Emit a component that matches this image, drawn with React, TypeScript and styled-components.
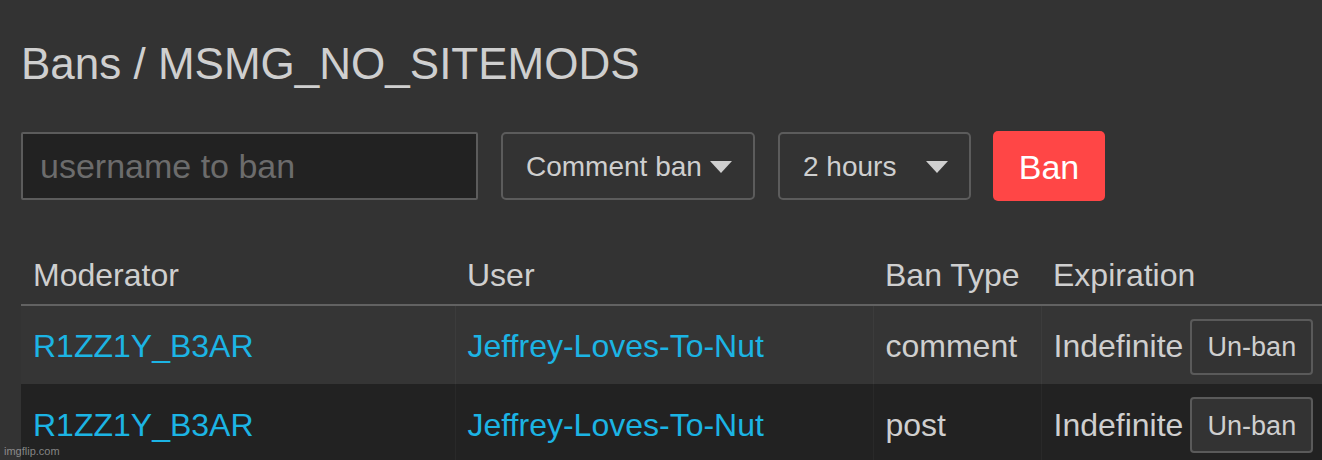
import React from 'react'
import styled, { createGlobalStyle } from 'styled-components';

const GlobalStyle = createGlobalStyle`
  html, body {
    margin: 0;
    padding: 0;
    background: #333333;
    font-family: "Liberation Sans", Arial, sans-serif;
    color: #cfcfcf;
    overflow: hidden;
  }
`

const Page = styled.div`
  position: relative;
  height: 460px;
  padding: 39px 0 0 21px;
  box-sizing: border-box;
  overflow: hidden;
`
const Title = styled.h1`
  margin: 0;
  font-size: 44px;
  line-height: 50px;
  font-weight: normal;
  color: #cfcfcf;
`
const Controls = styled.div`
  display: flex;
  align-items: center;
  height: 70px;
  margin-top: 42px;
  gap: 23px;
`
const UserInput = styled.input`
  width: 457px;
  height: 68px;
  box-sizing: border-box;
  background: #222222;
  border: 2px solid #5c5c5c;
  border-radius: 2px;
  padding: 0 17px;
  font-family: inherit;
  font-size: 34px;
  color: #cfcfcf;
  outline: none;
  &::placeholder {
    color: #6c6c6c;
  }
`
const Select = styled.div<{ $width: number }>`
  width: ${p => p.$width}px;
  height: 68px;
  box-sizing: border-box;
  border: 2px solid #5c5c5c;
  border-radius: 5px;
  display: flex;
  align-items: center;
  justify-content: space-between;
  padding: 2px 21px 0 23px;
  font-size: 28px;
  color: #cfcfcf;
`
const Arrow = styled.svg`
  width: 22px;
  height: 12px;
  display: block;
`
const BanButton = styled.button`
  width: 112px;
  height: 70px;
  margin-left: -1px;
  border: none;
  border-radius: 5px;
  background: #ff4646;
  color: #ffffff;
  font-family: inherit;
  font-size: 34px;
  padding: 2px 0 0;
`
const Table = styled.table`
  margin-top: 46px;
  width: 1301px;
  border-collapse: collapse;
  table-layout: fixed;
  font-size: 32px;
`
const HeadCell = styled.th<{ $width?: number }>`
  ${p => p.$width ? `width: ${p.$width}px;` : ''}
  box-sizing: border-box;
  text-align: left;
  font-weight: normal;
  line-height: 37px;
  padding: 10px 12px 10px;
  border-bottom: 2px solid #626262;
  color: #cfcfcf;
  white-space: nowrap;
`
const Row = styled.tr<{ $dark?: boolean }>`
  background: ${p => p.$dark ? '#222222' : '#353535'};
`
const Cell = styled.td`
  height: 79px;
  box-sizing: border-box;
  padding: 3px 12px 0;
  vertical-align: middle;
  white-space: nowrap;
  border-left: 1px solid rgba(255, 255, 255, 0.035);
  &:first-child {
    border-left: none;
  }
`
const UserLink = styled.a`
  color: #1cb4e4;
  text-decoration: none;
`
const Expiry = styled.div`
  display: flex;
  align-items: center;
  gap: 7px;
`
const UnbanButton = styled.button`
  flex-shrink: 0;
  width: 123px;
  height: 56px;
  box-sizing: border-box;
  background: #333333;
  border: 2px solid #5a5a5a;
  border-radius: 4px;
  color: #cfcfcf;
  font-family: inherit;
  font-size: 27px;
  padding: 2px 0 0;
`
const Watermark = styled.span`
  position: absolute;
  left: 4px;
  bottom: 3px;
  font-size: 11px;
  color: rgba(200, 200, 200, 0.6);
`

const DownArrow = () => (
  <Arrow viewBox="0 0 22 12">
    <polygon points="0,0 22,0 11,12" fill="#cfcfcf" />
  </Arrow>
)

const bans = [
  { mod: 'R1ZZ1Y_B3AR', user: 'Jeffrey-Loves-To-Nut', type: 'comment', expires: 'Indefinite' },
  { mod: 'R1ZZ1Y_B3AR', user: 'Jeffrey-Loves-To-Nut', type: 'post', expires: 'Indefinite' },
]

export default function App() {
  return (
    <Page>
      <GlobalStyle />
      <Title>Bans / MSMG_NO_SITEMODS</Title>
      <Controls>
        <UserInput placeholder="username to ban" />
        <Select $width={254}>Comment ban <DownArrow /></Select>
        <Select $width={193}>2 hours <DownArrow /></Select>
        <BanButton>Ban</BanButton>
      </Controls>
      <Table>
        <thead>
          <tr>
            <HeadCell $width={434}>Moderator</HeadCell>
            <HeadCell $width={418}>User</HeadCell>
            <HeadCell $width={168}>Ban Type</HeadCell>
            <HeadCell>Expiration</HeadCell>
          </tr>
        </thead>
        <tbody>
          {bans.map((b, i) => (
            <Row key={i} $dark={i % 2 === 1}>
              <Cell><UserLink>{b.mod}</UserLink></Cell>
              <Cell><UserLink>{b.user}</UserLink></Cell>
              <Cell>{b.type}</Cell>
              <Cell>
                <Expiry>
                  {b.expires}
                  <UnbanButton>Un-ban</UnbanButton>
                </Expiry>
              </Cell>
            </Row>
          ))}
        </tbody>
      </Table>
      <Watermark>imgflip.com</Watermark>
    </Page>
  )
}
